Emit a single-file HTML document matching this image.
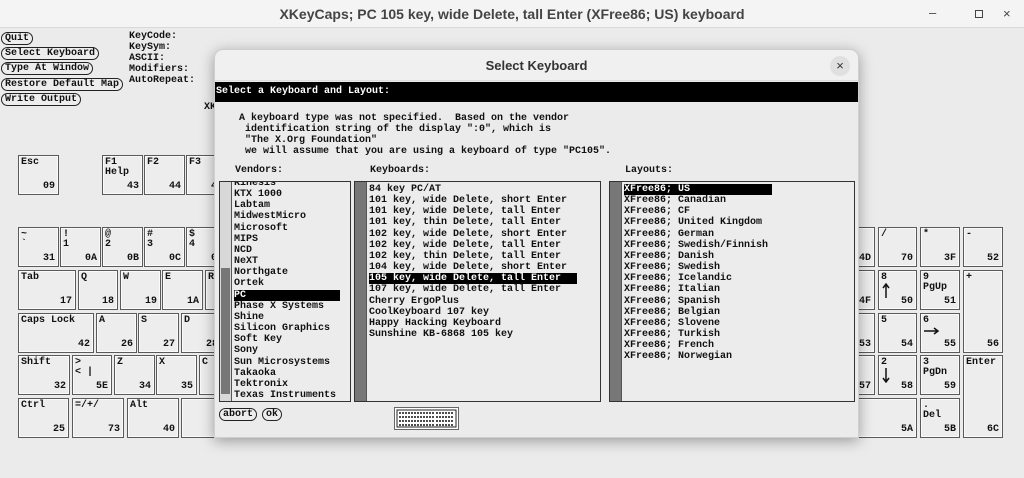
<!DOCTYPE html>
<html><head><meta charset="utf-8">
<style>
*{margin:0;padding:0;box-sizing:border-box}
body{width:1024px;height:478px;background:#ebebeb;position:relative;overflow:hidden;font-family:"Liberation Mono",monospace;font-weight:bold;font-size:10px;color:#111}
.a{position:absolute;white-space:pre;line-height:11px}
#tb{position:absolute;left:0;top:0;width:1024px;height:28px;background:#f4f4f4;border-bottom:1px solid #d8d8d8;font-family:"Liberation Sans",sans-serif;font-weight:bold;font-size:14px;color:#444;text-align:center;line-height:28px}
.btn{position:absolute;border:1px solid #222;border-radius:7px;height:13px;line-height:11px;padding:0 3px;background:#ededed;white-space:pre}
.k{position:absolute;border:1px solid #5a5a5a;background:#ededed;box-shadow:inset 0 0 0 1px #fafafa}
.k .t{position:absolute;left:2px;top:2px;white-space:pre;line-height:10px}
.k .c{position:absolute;right:3px;bottom:2px;line-height:10px}
#dlg{position:absolute;left:214px;top:49px;width:645px;height:389px;background:#ebebeb;border-radius:9px 9px 0 0;box-shadow:0 3px 14px rgba(0,0,0,.35);border:1px solid #cfcfcf}
#dt{position:absolute;left:0;top:0;width:100%;height:31px;background:#f0f0f0;border-radius:9px 9px 0 0;font-family:"Liberation Sans",sans-serif;font-size:13px;color:#333;text-align:center;line-height:32px;font-weight:bold;border-bottom:1px solid #ddd}
.box{position:absolute;border:1px solid #333;background:#ececec}
.sb{position:absolute;left:0;top:0;bottom:0;width:12px;background:#d8d8d8;border-right:1px solid #555}
.th{position:absolute;left:1px;right:1px;background:#777}
.sel{background:#000;color:#fff}
</style></head><body>
<div id="tb">XKeyCaps; PC 105 key, wide Delete, tall Enter (XFree86; US) keyboard</div>
<div class="a" style="left:929px;top:7px;font-family:'Liberation Sans';font-weight:normal;font-size:13px;color:#444">–</div>
<div style="position:absolute;left:975px;top:10px;width:8px;height:8px;border:1px solid #444"></div>
<div class="a" style="left:1003px;top:8px;font-family:'Liberation Sans';font-weight:normal;font-size:13px;color:#444">×</div>

<div class="btn" style="left:1px;top:32px">Quit</div>
<div class="btn" style="left:1px;top:47px">Select Keyboard</div>
<div class="btn" style="left:1px;top:62px">Type At Window</div>
<div class="btn" style="left:1px;top:78px">Restore Default Map</div>
<div class="btn" style="left:1px;top:93px">Write Output</div>
<div class="a" style="left:129px;top:31px">KeyCode:
KeySym:
ASCII:
Modifiers:
AutoRepeat:</div>
<div class="a" style="left:204px;top:102px">XK</div>

<div class="k" style="left:18px;top:155px;width:41px;height:40px"><span class="t">Esc</span><span class="c">09</span></div>
<div class="k" style="left:102px;top:155px;width:41px;height:40px"><span class="t">F1
Help</span><span class="c">43</span></div>
<div class="k" style="left:144px;top:155px;width:41px;height:40px"><span class="t">F2</span><span class="c">44</span></div>
<div class="k" style="left:186px;top:155px;width:41px;height:40px"><span class="t">F3</span><span class="c">45</span></div>

<div class="k" style="left:18px;top:227px;width:41px;height:40px"><span class="t">~
`</span><span class="c">31</span></div>
<div class="k" style="left:60px;top:227px;width:41px;height:40px"><span class="t">!
1</span><span class="c">0A</span></div>
<div class="k" style="left:102px;top:227px;width:41px;height:40px"><span class="t">@
2</span><span class="c">0B</span></div>
<div class="k" style="left:144px;top:227px;width:41px;height:40px"><span class="t">#
3</span><span class="c">0C</span></div>
<div class="k" style="left:186px;top:227px;width:41px;height:40px"><span class="t">$
4</span><span class="c">0D</span></div>

<div class="k" style="left:18px;top:270px;width:58px;height:40px"><span class="t">Tab</span><span class="c">17</span></div>
<div class="k" style="left:78px;top:270px;width:40px;height:40px"><span class="t">Q</span><span class="c">18</span></div>
<div class="k" style="left:120px;top:270px;width:41px;height:40px"><span class="t">W</span><span class="c">19</span></div>
<div class="k" style="left:162px;top:270px;width:41px;height:40px"><span class="t">E</span><span class="c">1A</span></div>
<div class="k" style="left:205px;top:270px;width:41px;height:40px"><span class="t">R</span></div>

<div class="k" style="left:18px;top:313px;width:76px;height:40px"><span class="t">Caps Lock</span><span class="c">42</span></div>
<div class="k" style="left:96px;top:313px;width:41px;height:40px"><span class="t">A</span><span class="c">26</span></div>
<div class="k" style="left:138px;top:313px;width:41px;height:40px"><span class="t">S</span><span class="c">27</span></div>
<div class="k" style="left:181px;top:313px;width:41px;height:40px"><span class="t">D</span><span class="c">28</span></div>

<div class="k" style="left:18px;top:355px;width:52px;height:40px"><span class="t">Shift</span><span class="c">32</span></div>
<div class="k" style="left:72px;top:355px;width:40px;height:40px"><span class="t">&gt;
&lt; |</span><span class="c">5E</span></div>
<div class="k" style="left:114px;top:355px;width:41px;height:40px"><span class="t">Z</span><span class="c">34</span></div>
<div class="k" style="left:156px;top:355px;width:41px;height:40px"><span class="t">X</span><span class="c">35</span></div>
<div class="k" style="left:199px;top:355px;width:41px;height:40px"><span class="t">C</span></div>

<div class="k" style="left:18px;top:398px;width:51px;height:40px"><span class="t">Ctrl</span><span class="c">25</span></div>
<div class="k" style="left:72px;top:398px;width:52px;height:40px"><span class="t">=/+/</span><span class="c">73</span></div>
<div class="k" style="left:127px;top:398px;width:52px;height:40px"><span class="t">Alt</span><span class="c">40</span></div>
<div class="k" style="left:181px;top:398px;width:52px;height:40px"></div>

<div class="k" style="left:835px;top:227px;width:40px;height:40px"><span class="t">&lt;</span><span class="c">4D</span></div>
<div class="k" style="left:878px;top:227px;width:39px;height:40px"><span class="t">/</span><span class="c">70</span></div>
<div class="k" style="left:920px;top:227px;width:40px;height:40px"><span class="t">*</span><span class="c">3F</span></div>
<div class="k" style="left:963px;top:227px;width:40px;height:40px"><span class="t">-</span><span class="c">52</span></div>
<div class="k" style="left:835px;top:270px;width:40px;height:40px"><span class="t">e</span><span class="c">4F</span></div>
<div class="k" style="left:878px;top:270px;width:39px;height:40px"><span class="t">8</span><svg style="position:absolute;left:3px;top:12px" width="8" height="16"><path d="M4 15V2M1 5L4 1L7 5" stroke="#111" stroke-width="1.5" fill="none"/></svg><span class="c">50</span></div>
<div class="k" style="left:920px;top:270px;width:40px;height:40px"><span class="t">9
PgUp</span><span class="c">51</span></div>
<div class="k" style="left:963px;top:270px;width:40px;height:83px"><span class="t">+</span><span class="c">56</span></div>
<div class="k" style="left:835px;top:313px;width:40px;height:40px"><span class="c">53</span></div>
<div class="k" style="left:878px;top:313px;width:39px;height:40px"><span class="t">5</span><span class="c">54</span></div>
<div class="k" style="left:920px;top:313px;width:40px;height:40px"><span class="t">6</span><svg style="position:absolute;left:2px;top:13px" width="16" height="8"><path d="M1 4H14M11 1L15 4L11 7" stroke="#111" stroke-width="1.5" fill="none"/></svg><span class="c">55</span></div>
<div class="k" style="left:835px;top:355px;width:40px;height:40px"><span class="c">57</span></div>
<div class="k" style="left:878px;top:355px;width:39px;height:40px"><span class="t">2</span><svg style="position:absolute;left:3px;top:11px" width="8" height="16"><path d="M4 1V14M1 11L4 15L7 11" stroke="#111" stroke-width="1.5" fill="none"/></svg><span class="c">58</span></div>
<div class="k" style="left:920px;top:355px;width:40px;height:40px"><span class="t">3
PgDn</span><span class="c">59</span></div>
<div class="k" style="left:963px;top:355px;width:40px;height:83px"><span class="t">Enter</span><span class="c">6C</span></div>
<div class="k" style="left:835px;top:398px;width:82px;height:40px"><span class="c">5A</span></div>
<div class="k" style="left:920px;top:398px;width:40px;height:40px"><span class="t">.
Del</span><span class="c">5B</span></div>

<div id="dlg">
<div id="dt">Select Keyboard</div>
<div style="position:absolute;right:8px;top:6px;width:20px;height:20px;border-radius:50%;background:#e0e0e0;text-align:center;line-height:20px;font-family:'Liberation Sans';font-weight:normal;font-size:13px;color:#333">×</div>
<div class="a" style="left:0;top:32px;width:643px;height:20px;background:#000;color:#fff;line-height:20px;padding-left:1px">Select a Keyboard and Layout:</div>
<div class="a" style="left:18px;top:63px"> A keyboard type was not specified.  Based on the vendor
  identification string of the display ":0", which is
  "The X.Org Foundation"
  we will assume that you are using a keyboard of type "PC105".</div>
<div class="a" style="left:20px;top:115px">Vendors:</div>
<div class="a" style="left:155px;top:115px">Keyboards:</div>
<div class="a" style="left:410px;top:115px">Layouts:</div>

<div class="box" style="left:4px;top:131px;width:132px;height:221px;overflow:hidden">
<div class="sb"><div class="th" style="top:86px;height:126px"></div></div>
<div class="a" style="left:14px;top:-4px;line-height:11.15px">Kinesis
KTX 1000
Labtam
MidwestMicro
Microsoft
MIPS
NCD
NeXT
Northgate
Ortek
<span class="sel" style="display:inline-block;width:106px">PC</span>
Phase X Systems
Shine
Silicon Graphics
Soft Key
Sony
Sun Microsystems
Takaoka
Tektronix
Texas Instruments</div></div>

<div class="box" style="left:139px;top:131px;width:247px;height:221px">
<div class="sb" style="background:#777"></div>
<div class="a" style="left:14px;top:2px;line-height:11.15px">84 key PC/AT
101 key, wide Delete, short Enter
101 key, wide Delete, tall Enter
101 key, thin Delete, tall Enter
102 key, wide Delete, short Enter
102 key, wide Delete, tall Enter
102 key, thin Delete, tall Enter
104 key, wide Delete, short Enter
<span class="sel" style="display:inline-block;width:208px">105 key, wide Delete, tall Enter</span>
107 key, wide Delete, tall Enter
Cherry ErgoPlus
CoolKeyboard 107 key
Happy Hacking Keyboard
Sunshine KB-6868 105 key</div></div>

<div class="box" style="left:394px;top:131px;width:246px;height:221px">
<div class="sb" style="background:#777"></div>
<div class="a" style="left:14px;top:2px;line-height:11.15px"><span class="sel" style="display:inline-block;width:148px">XFree86; US</span>
XFree86; Canadian
XFree86; CF
XFree86; United Kingdom
XFree86; German
XFree86; Swedish/Finnish
XFree86; Danish
XFree86; Swedish
XFree86; Icelandic
XFree86; Italian
XFree86; Spanish
XFree86; Belgian
XFree86; Slovene
XFree86; Turkish
XFree86; French
XFree86; Norwegian</div></div>

<div class="btn" style="left:4px;top:358px">abort</div>
<div class="btn" style="left:47px;top:358px">ok</div>
<svg style="position:absolute;left:179px;top:357px" width="65" height="23" viewBox="0 0 65 23">
<rect x="0.5" y="0.5" width="64" height="22" fill="#fff" stroke="#666"/>
<rect x="3" y="3" width="59" height="17" fill="none" stroke="#222"/>
<path d="M5 6H40M42 6H60M5 10H40M42 10H60M5 14H40M42 14H60M5 18H40M42 18H60" stroke="#111" stroke-width="1.6" stroke-dasharray="2 1"/>
</svg>
</div>
</body></html>
